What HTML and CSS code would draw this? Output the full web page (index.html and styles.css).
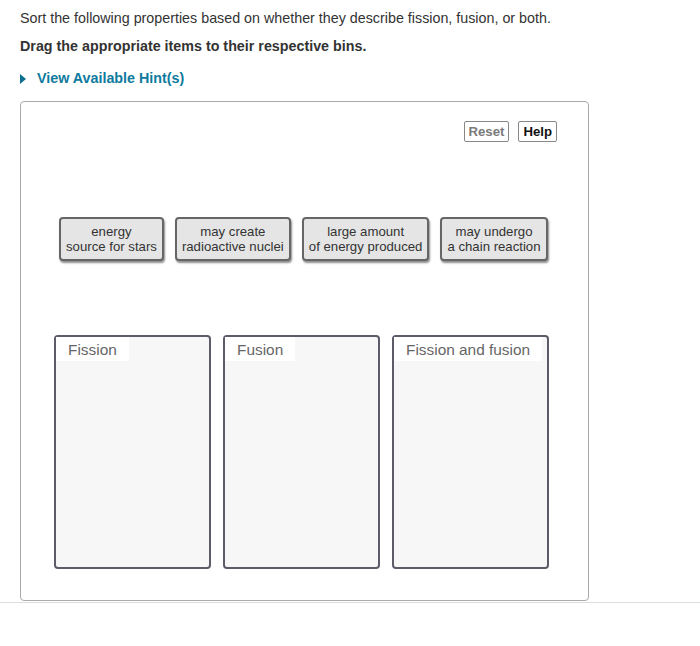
FILE: index.html
```html
<!DOCTYPE html>
<html>
<head>
<meta charset="utf-8">
<link rel="stylesheet" href="styles.css">
</head>
<body>
<div class="page">
  <p class="intro">Sort the following properties based on whether they describe fission, fusion, or both.</p>
  <p class="instr">Drag the appropriate items to their respective bins.</p>
  <div class="hint"><span class="tri"></span><span class="hint-text">View Available Hint(s)</span></div>
  <div class="board">
    <div class="tools">
      <button class="btn reset">Reset</button>
      <button class="btn help">Help</button>
    </div>
    <div class="cards">
      <div class="card">energy<br>source for stars</div>
      <div class="card">may create<br>radioactive nuclei</div>
      <div class="card">large amount<br>of energy produced</div>
      <div class="card">may undergo<br>a chain reaction</div>
    </div>
    <div class="bins">
      <div class="bin"><span class="bin-label">Fission</span></div>
      <div class="bin"><span class="bin-label">Fusion</span></div>
      <div class="bin"><span class="bin-label">Fission and fusion</span></div>
    </div>
  </div>
</div>
<div class="rule"></div>
</body>
</html>
```

FILE: styles.css
```css
html, body {
  margin: 0;
  padding: 0;
  background: #fff;
  font-family: "Liberation Sans", Arial, sans-serif;
  color: #333;
}
.page {
  padding: 9px 0 0 20px;
}
.intro {
  margin: 0;
  font-size: 14.3px;
  line-height: 19px;
}
.instr {
  margin: 9px 0 0;
  font-size: 14.3px;
  line-height: 19px;
  font-weight: bold;
}
.hint {
  margin-top: 13px;
  display: flex;
  align-items: center;
  color: #0e7a9e;
  font-size: 14.3px;
  font-weight: bold;
  line-height: 19px;
}
.tri {
  width: 0;
  height: 0;
  border-top: 5px solid transparent;
  border-bottom: 5px solid transparent;
  border-left: 6px solid #0e6f90;
  margin-right: 11px;
}
.board {
  margin-top: 13px;
  width: 567px;
  height: 498px;
  border: 1px solid #aaa;
  border-radius: 4px;
  display: flex;
  flex-direction: column;
}
.tools {
  display: flex;
  justify-content: flex-end;
  gap: 9px;
  padding: 19px 31px 0 0;
}
.btn {
  font-family: "Liberation Sans", Arial, sans-serif;
  font-size: 13.2px;
  font-weight: bold;
  background: #fff;
  border: 1px solid #888;
  border-radius: 2px;
  height: 21px;
  padding: 0 4px;
  line-height: 19px;
}
.reset { color: #7a7a7a; }
.help { color: #111; }
.cards {
  display: flex;
  gap: 11px;
  padding: 75px 0 0 38px;
}
.card {
  background: #e5e5e5;
  border: 2px solid #666;
  border-radius: 4px;
  box-shadow: 1px 2px 2px rgba(0,0,0,0.45);
  font-size: 13.2px;
  line-height: 15px;
  color: #333;
  text-align: center;
  padding: 5px 5px;
}
.bins {
  display: flex;
  gap: 12px;
  padding: 74px 0 0 33px;
}
.bin {
  width: 153px;
  height: 230px;
  border: 2px solid #5c5c68;
  border-radius: 4px;
  background: #f7f7f7;
}
.bin-label {
  display: inline-block;
  background: #fff;
  color: #666;
  font-size: 15.4px;
  line-height: 23px;
  padding: 1px 12px 0 12px;
}
.rule {
  margin-top: 1px;
  height: 1px;
  background: #ddd;
}
```
